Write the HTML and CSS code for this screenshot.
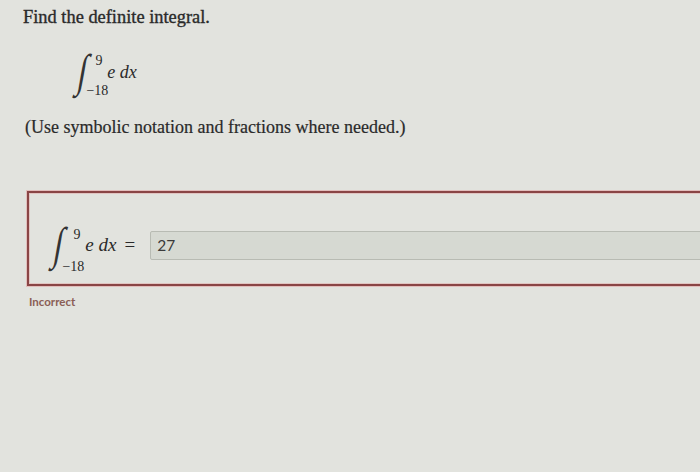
FILE: index.html
```html
<!DOCTYPE html>
<html>
<head>
<meta charset="utf-8">
<link rel="stylesheet" href="styles.css">
</head>
<body>
<div class="page">
  <p class="prompt">Find the definite integral.</p>
  <div class="integral display">
    <span class="int-sign">∫</span>
    <span class="limits">
      <span class="upper">9</span>
      <span class="lower">−18</span>
    </span>
    <span class="integrand"><i>e</i> <i>dx</i></span>
  </div>
  <p class="instructions">(Use symbolic notation and fractions where needed.)</p>
  <div class="answer-box">
    <div class="integral answer">
      <span class="int-sign">∫</span>
      <span class="limits">
        <span class="upper">9</span>
        <span class="lower">−18</span>
      </span>
      <span class="integrand"><i>e</i> <i>dx</i><span class="eq">=</span></span>
      <div class="input-field">27</div>
    </div>
  </div>
  <div class="feedback">Incorrect</div>
</div>
</body>
</html>
```
FILE: styles.css
```css
html, body {
  margin: 0;
  padding: 0;
  height: 100%;
  overflow: hidden;
}
body {
  background: #e2e3de;
  color: #2a2a2a;
  font-family: "Liberation Serif", "Times New Roman", serif;
}
.page {
  padding: 7px 0 0 23px;
}
.prompt {
  margin: 0;
  font-size: 18.4px;
  line-height: 21px;
  -webkit-text-stroke: 0.35px #2a2a2a;
}
.integral {
  display: flex;
  align-items: center;
}
.display {
  margin: 14px 0 0 55px;
  height: 56px;
}
.int-sign {
  font-size: 38px;
  line-height: 46px;
  height: 46px;
  font-weight: normal;
  transform: skewX(-10deg) scale(0.85, 1.2);
  display: inline-block;
  color: #333;
}
.limits {
  display: flex;
  flex-direction: column;
  height: 46px;
  font-size: 14px;
  line-height: 13px;
  margin-left: -2px;
}
.upper {
  margin-left: 9px;
  margin-top: 7px;
}
.lower {
  margin-top: auto;
  margin-bottom: -4px;
}
.integrand {
  font-size: 18px;
  margin-left: -1px;
  margin-top: 4px;
}
.integrand i {
  font-style: italic;
}
.instructions {
  margin: 19px 0 0 2px;
  font-size: 18px;
  line-height: 21px;
  -webkit-text-stroke: 0.2px #2a2a2a;
}
.answer-box {
  margin: 53px -30px 0 4px;
  height: 91px;
  border: 2px solid #8a4545;
  box-shadow: 0 0 0 1px rgba(225, 160, 160, 0.55), inset 0 0 0 1px rgba(225, 160, 160, 0.45);
  display: flex;
  align-items: center;
  padding-left: 25px;
}
.answer {
  flex: 1;
  margin-top: 8px;
}
.answer .upper {
  margin-top: 8px;
  margin-left: 11px;
}
.answer .lower {
  margin-bottom: -7px;
}
.answer .integrand {
  font-size: 19px;
  margin-left: 1px;
  margin-right: 15px;
}
.eq {
  margin-left: 8px;
}
.input-field {
  flex: 1;
  height: 27px;
  margin-top: 6px;
  background: #d6d9d2;
  border: 1px solid #b8bbb3;
  border-radius: 2px;
  font-family: Lato, "Liberation Sans", sans-serif;
  font-size: 15.5px;
  line-height: 27px;
  padding-left: 6px;
  color: #3a3a3a;
}
.feedback {
  margin: 9px 0 0 6px;
  font-family: Lato, "Liberation Sans", sans-serif;
  font-weight: bold;
  font-size: 11.5px;
  color: #8a5e55;
}
```
